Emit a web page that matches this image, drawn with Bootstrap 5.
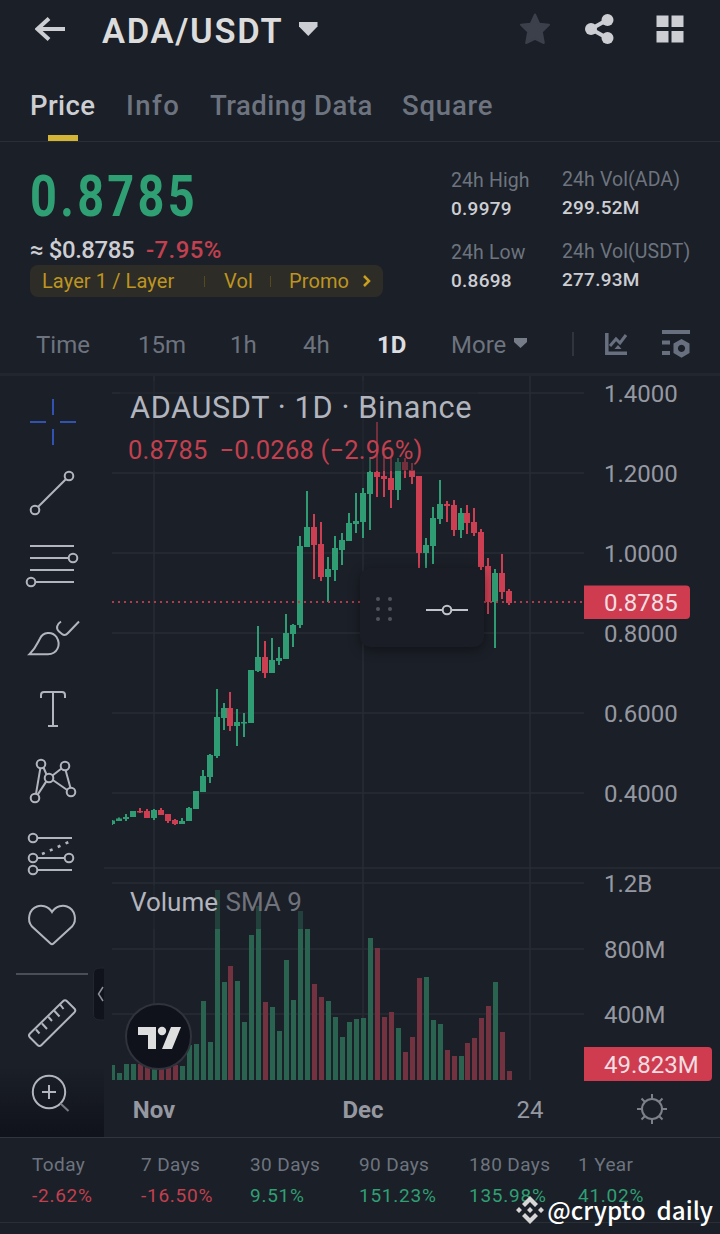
<!DOCTYPE html>
<html lang="en" data-bs-theme="dark">
<head>
<meta charset="utf-8">
<meta name="viewport" content="width=device-width, initial-scale=1">
<title>ADA/USDT</title>
<link href="https://cdn.jsdelivr.net/npm/bootstrap@5.3.0/dist/css/bootstrap.min.css" rel="stylesheet">
<style>
  :root { --bg:#1b1f27; --line:#2a2e36; --fg:#cdced3; --dim:#6d747f; --up:#2f9f74; --down:#c2404f; --gold:#bd951f; }
  body { background:var(--bg); color:var(--fg); font-family:Roboto,"Liberation Sans",sans-serif; width:720px; height:1234px; overflow:hidden; }
  svg { display:block; flex:none; }
  .topbar { height:62px; }
  .pair { font-size:34.5px; font-weight:600; letter-spacing:1.7px; line-height:61px; color:#dcdcdc; margin-left:37px; width:197px; }
  .tabs { height:80px; border-bottom:1px solid var(--line); padding:25px 0 0 30px; font-size:27.5px; font-weight:500; line-height:37px; color:var(--dim); display:grid; grid-template-columns:96px 84px 192px auto; justify-content:start; }
  .tabs .current { color:var(--fg); }
  .tabs .current::after { content:""; position:absolute; left:18px; bottom:0; width:30px; height:6px; background:#d3b437; }
  .quote { height:174px; }
  .lastprice { font-size:56.5px; font-weight:700; line-height:60px; color:var(--up); margin-top:25px; letter-spacing:4px; width:max-content; transform:scaleX(.83); transform-origin:left; }
  .fiat { font-size:24px; font-weight:500; line-height:30px; margin-top:8px; }
  .tags { width:353px; height:32px; border-radius:8px; background:#2e2c27; color:var(--gold); font-size:20px; line-height:32px; padding-left:12px; letter-spacing:.1px; }
  .tags i { width:1px; height:11px; background:#57491f; }
  .figures { padding-top:27px; font-size:19.5px; line-height:24px; }
  .figures dt { font-weight:400; color:var(--dim); margin-bottom:4px; letter-spacing:.1px; }
  .figures dd { font-weight:500; font-size:19px; margin-bottom:20px; letter-spacing:.25px; }
  .frames { height:57px; padding-left:36px; display:grid; grid-template-columns:102px 92px 73px 74px 74px 116px 37px 57px 40px; align-items:center; font-size:24px; color:var(--dim); line-height:57px; }
  .frames > span { padding-top:2px; line-height:55px; }
  .frames > svg { margin-top:-2px; }
  .frames .current { color:#dcdde0; font-weight:700; }
  .workspace { height:764px; border-top:3px solid #22262e; }
  .tools { width:104px; padding-top:10px; background:linear-gradient(to bottom,transparent 690px,#10131c 757px); }
  .tools svg { fill:none; stroke:#b2b5be; stroke-width:2; }
  .tools hr { width:72px; height:2px; margin:11px 0 12px 16px; border:0; background:#6a6e78; opacity:.6; }
  .legend { left:120px; white-space:nowrap; }
  .legend div { background:rgba(27,31,39,.5); width:max-content; }
  .periods { height:86px; border-top:1px solid #32353d; border-bottom:1px solid var(--line); padding:14px 0 0 32px; display:grid; grid-template-columns:109px 109px 109px 110px 109px 100px; font-size:19px; line-height:26px; letter-spacing:.4px; }
  .periods span { color:var(--dim); display:block; margin-bottom:5px; }
  .periods b { letter-spacing:.75px; }
  .up { color:var(--up); } .down { color:var(--down); }
  .sig { right:7px; bottom:8px; color:#fff; font:500 24.2px/32px "Noto Sans CJK SC",sans-serif; white-space:pre; }
</style>
</head>
<body class="position-relative">
<header class="topbar d-flex align-items-center">
  <svg width="30" height="62" style="margin-left:35px" viewBox="35 0 30 62" fill="none" stroke="#cdced3" stroke-width="4"><path d="M65 29H38M49 18.500 37.500 29 49 39.500"/></svg>
  <div class="pair">ADA/USDT</div>
  <svg width="19" height="62" viewBox="298.500 0 19 62" fill="#cdced3"><path d="M298.500 22h18.500v4.500L307.800 36 298.500 26.500z"/></svg>
  <svg class="ms-auto" width="201" height="62" viewBox="519 0 201 62" fill="#cdced3">
    <path fill="#3b404b" stroke="#3b404b" stroke-width="2" stroke-linejoin="round" d="M535 14.500l4.300 9.300 9.700 1-7.200 6.900 2 11.300-8.800-4.200-8.800 4.200 2-11.300-7.200-6.900 9.700-1z"/>
    <path d="M607 20 591 29l16 9" fill="none" stroke="#cdced3" stroke-width="4"/><circle cx="591" cy="29" r="6"/><circle cx="607.500" cy="20" r="6"/><circle cx="607.500" cy="38" r="6"/>
    <path d="M656.500 15.500h12v11.500h-12zM671.500 15.500h12v11.500h-12zM656.500 31h12v11.500h-12zM671.500 31h12v11.500h-12z"/>
  </svg>
</header>
<nav class="tabs">
  <div class="current position-relative" style="letter-spacing:.4px">Price</div><div style="letter-spacing:1.5px">Info</div><div style="letter-spacing:.5px">Trading Data</div><div style="letter-spacing:.8px">Square</div>
</nav>
<section class="quote d-flex">
  <div style="width:421px;padding-left:30px">
    <div class="lastprice">0.8785</div>
    <div class="fiat d-flex"><span style="width:116px;letter-spacing:-.45px">≈ $0.8785</span><span class="down" style="letter-spacing:.4px">-7.95%</span></div>
    <div class="tags d-flex align-items-center"><span style="width:162px">Layer 1 / Layer</span><i></i><span style="width:65px;padding-left:19px">Vol</span><i></i><span style="width:92px;padding-left:18px">Promo</span>
      <svg width="8" height="12" fill="none" stroke="#c9a020" stroke-width="2.500"><path d="M1 1l5 5-5 5"/></svg></div>
  </div>
  <dl class="figures m-0" style="width:141px;padding-left:30px"><dt>24h High</dt><dd>0.9979</dd><dt>24h Low</dt><dd>0.8698</dd></dl>
  <dl class="figures m-0" style="padding-top:25.500px"><dt>24h Vol(ADA)</dt><dd>299.52M</dd><dt>24h Vol(USDT)</dt><dd>277.93M</dd></dl>
</section>
<nav class="frames">
  <span>Time</span><span>15m</span><span>1h</span><span>4h</span><span class="current">1D</span>
  <span class="d-flex align-items-center gap-2">More <svg width="14" height="12" fill="#777d88" style="margin-top:-3px"><path d="M0 0h13v4L6.500 10 0 4z"/></svg></span>
  <svg width="10" height="26" viewBox="568 330 10 26"><path d="M574 331v24" stroke="#30343d" stroke-width="2"/></svg>
  <svg width="24" height="26" viewBox="604 330 24 26" fill="none" stroke="#687080" stroke-width="3.500"><path d="M606.800 332v20.300H627"/><path d="M610 345l6-7 4 4 6-8" stroke-width="3"/><path d="M614.500 348l3.500-4 3.500 4z" fill="#687080" stroke="none"/></svg>
  <svg width="30" height="30" viewBox="661 329 30 30" fill="#687080"><path d="M662 330h28v4h-28zM662 340.500h8v4h-8zM662 351h8v4h-8z"/><path fill-rule="evenodd" d="M681.500 339l8 4.500v9.500l-8 4.700-8-4.700v-9.500zM681.500 344.800a3.600 3.600 0 1 0 .01 0z"/></svg>
</nav>
<main class="workspace d-flex position-relative">
  <aside class="tools">
    <svg width="104" height="72" viewBox="0 386 104 72" style="stroke:#3152b0"><path d="M53 399v16M53 429v16M30 422h16M60 422h16"/></svg>
    <svg width="104" height="72" viewBox="0 458 104 72"><path d="M38.200 506.800 65.800 479.200"/><circle cx="35" cy="510" r="4.300"/><circle cx="69" cy="476" r="4.300"/></svg>
    <svg width="104" height="72" viewBox="0 530 104 72"><path d="M30 546h44M30 558h38.500M30 570h44M35.500 582H74"/><circle cx="73" cy="558" r="4.300"/><circle cx="31" cy="582" r="4.300"/></svg>
    <svg width="104" height="72" viewBox="0 602 104 72"><path d="M29.500 654.200C36 648 37.500 643 40 638.500C43 632 52 631 56.500 637C61.500 645 57 654.200 48 654.200Z"/><path d="M61 621.500C57 624 55.500 628.500 59 631.500L62 634Q65 636.500 68 633L79 621.500"/></svg>
    <svg width="104" height="72" viewBox="0 674 104 72"><path d="M41 698v-3q0-3 3-3h18q3 0 3 3v3M53 692v34M48 726h10"/></svg>
    <svg width="104" height="72" viewBox="0 746 104 72"><path d="M36 793.800 40.300 768.300M43.500 767.500 46.500 774.500M52.500 775.500 61.500 768.500M65.600 770.300 70.400 787.700M52.800 780 67.200 790M37.700 794.600 46.300 781.400"/><circle cx="41" cy="764" r="4.300"/><circle cx="65" cy="766" r="4.300"/><circle cx="49" cy="778" r="4.300"/><circle cx="71" cy="792" r="4.300"/><circle cx="35" cy="798" r="4.300"/></svg>
    <svg width="104" height="72" viewBox="0 818 104 72"><path d="M37.500 838H72M37.500 858h27M37.500 870H72"/><path d="M42 854 70 841.500" stroke-dasharray="3 5.600" stroke-width="2.500"/><circle cx="33" cy="838" r="4.300"/><circle cx="33" cy="858" r="4.300"/><circle cx="69" cy="858" r="4.300"/><circle cx="33" cy="870" r="4.300"/></svg>
    <svg width="104" height="72" viewBox="0 890 104 72"><path d="M52 912C48 905.500 41 905 37 906.500C29 909.500 26.500 920 32 926.500L50.500 943.500Q52 945 53.500 943.500L72 926.500C77.500 920 75 909.500 67 906.500C63 905 56 905.500 52 912Z"/></svg>
    <hr>
    <svg width="104" height="72" viewBox="0 987 104 72"><path d="M63 1001.200q2-2 4 0l7.300 7.300q2 2 0 4L41.500 1045q-2 2-4 0l-7.500-7.500q-2-2 0-4zM36 1029.500l3.500 4M42 1023.500l5 5.500M48.500 1017l3.500 4M54.500 1011l5 5.500M60.500 1005l3 4"/></svg>
    <svg width="104" height="72" viewBox="0 1059 104 72"><circle cx="49" cy="1092" r="16.200"/><path d="M42 1092h14M49 1085v14"/><path d="M60.500 1103.500l8 7.500" stroke="#777a83"/></svg>
  </aside>
  <svg id="chart" width="616" height="761" viewBox="104 376 616 761">
    <g stroke="#282c34" stroke-width="1.500">
      <path d="M112 393H584M112 473H584M112 553H584M112 633H584M112 713H584M112 793H584M112 883H584M112 949H584M112 1014H584M154 376V1080M363 376V1080M530 376V1080"/>
      <path d="M104 868H720"/>
    </g>
    <g id="series"></g>
    <path d="M112 602H584" stroke="#b03b4b" stroke-width="2" stroke-dasharray="2 4"/>
    <g fill="#9598a1" font-size="24" font-family="Roboto, sans-serif">
      <text x="604" y="402">1.4000</text><text x="604" y="482">1.2000</text><text x="604" y="562">1.0000</text><text x="604" y="642">0.8000</text><text x="604" y="722">0.6000</text><text x="604" y="802">0.4000</text>
      <text x="604" y="892">1.2B</text><text x="604" y="958">800M</text><text x="604" y="1023">400M</text>
      <g text-anchor="middle"><text x="154" y="1118" font-weight="700">Nov</text><text x="363" y="1118" font-weight="700">Dec</text><text x="530" y="1118">24</text></g>
    </g>
    <path d="M584 585.500h102q4 0 4 4v25.500q0 4-4 4H584zM584 1047h124q4 0 4 4v26q0 4-4 4H584z" fill="#cf3c50"/>
    <g fill="#f3dde0" font-size="24" font-family="Roboto, sans-serif"><text x="604" y="611">0.8785</text><text x="604" y="1073">49.823M</text></g>
    <g fill="none" stroke="#7d8089" stroke-width="2"><circle cx="652" cy="1109" r="10"/><path d="M652 1094v5M652 1119v5M637 1109h5M662 1109h5M641.500 1098.500l3.500 3.500M659 1116l3.500 3.500M641.500 1119.500l3.500-3.500M659 1102l3.500-3.500"/></g>
  </svg>
  <div class="legend position-absolute" style="top:5px">
    <div style="font-size:30.700px;line-height:45px;letter-spacing:.62px;padding:4px 6px 0 10px;color:#b2b5be">ADAUSDT · 1D · Binance</div>
    <div style="font-size:25.500px;line-height:40px;letter-spacing:.2px;padding:0 3px 1px 8px" class="down"><span style="margin-right:12px">0.8785</span><span>−0.0268 (−2.96%)</span></div>
  </div>
  <div class="legend position-absolute" style="top:509px">
    <div style="font-size:26px;line-height:34px;padding:0 4px 10px 10px;color:#b2b5be">Volume <span style="color:#70737c;margin-left:1px">SMA 9</span></div>
  </div>
  <svg class="position-absolute" style="left:340px;top:172px;filter:drop-shadow(0 3px 6px rgba(0,0,0,.4))" width="164" height="120" viewBox="340 548 164 120">
    <rect x="360" y="568" width="124" height="79" rx="10" fill="#1a1d25"/>
    <g fill="#50535c"><circle cx="378" cy="599" r="2"/><circle cx="390" cy="599" r="2"/><circle cx="378" cy="609" r="2"/><circle cx="390" cy="609" r="2"/><circle cx="378" cy="619" r="2"/><circle cx="390" cy="619" r="2"/></g>
    <g fill="none" stroke="#c2c4cb" stroke-width="2"><path d="M426 610h16.500M451.500 610H468"/><circle cx="447" cy="610" r="4.300"/></g>
  </svg>
  <svg class="position-absolute" style="left:92px;top:591px" width="12" height="54" viewBox="92 967 12 54"><path d="M104.500 968h-4q-7 0-7 6v40q0 6 7 6h4z" fill="#10131c" stroke="#23262f"/><path d="M103 987l-4.500 7 4.500 7" fill="none" stroke="#8d9099" stroke-width="1.500"/></svg>
  <svg class="position-absolute" style="left:124px;top:626px" width="70" height="70" viewBox="124 1002 70 70"><circle cx="158.500" cy="1036.500" r="32.500" fill="#0f121b" stroke="#30333c" stroke-width="2"/><path d="M138 1027h18v22h-8v-14h-10zM171 1027h10l-9 22h-10z" fill="#dedede"/><circle cx="162" cy="1031" r="4.200" fill="#dedede"/></svg>
</main>
<section class="periods">
  <div><span>Today</span><b class="fw-normal down">-2.62%</b></div>
  <div><span>7 Days</span><b class="fw-normal down">-16.50%</b></div>
  <div><span>30 Days</span><b class="fw-normal up">9.51%</b></div>
  <div><span>90 Days</span><b class="fw-normal up">151.23%</b></div>
  <div><span>180 Days</span><b class="fw-normal up">135.98%</b></div>
  <div><span>1 Year</span><b class="fw-normal up">41.02%</b></div>
</section>
<div class="sig position-absolute d-flex align-items-center">
  <svg width="28" height="28" viewBox="0 0 28 28" fill="#d6d6d6" style="margin-right:3px"><path d="M14 0l8 8-3 3-5-5-5 5-3-3zM14 28l8-8-3-3-5 5-5-5-3 3zM3 11l3 3-3 3-3-3zM25 11l3 3-3 3-3-3zM14 11l3 3-3 3-3-3z"/></svg><span>@crypto  daily</span>
</div>
<script src="https://cdn.jsdelivr.net/npm/bootstrap@5.3.0/dist/js/bootstrap.bundle.min.js"></script>
<script>
  // Each day: direction, high, body top, body bottom, low, volume top
  const days = `g 820 820.500 824 825 1065|g 817.500 818.500 821 821 1073|g 814 817 819 821 1064|g 811 811 817 817 1064|r 808 811 812.500 813 1064|r 809 811 818 818 1064|g 809 810 818 820 1060|r 808 810 815 815 1065|r 814 814 821 823 1065|r 819 820 824 825 1065|g 818 821 824 824 1066|g 807 808 821 821 1045|g 791 791 809 809 1044|g 770 776 792 792 1001|g 754 755 777 783 1042|g 689 717 756 758 890|g 703 708 718 730 982|r 692 708 726 731 966|g 709 722 726 746 981|g 713 722 723.500 737 1022|g 670 670 723 723 935|g 626 657 671 672 906|r 641 657 673 678 1002|g 638 660 673 673 1007|g 647 658 661 665 1031|g 614 633 659 659 960|g 624 625 634 647 1000|g 536 546 625 628 911|g 491 527 547 547 929|r 514 527 545 579 984|r 522 544 577 581 997|g 557 569 577 602 1001|g 536 548 570 581 1017|g 533 540 550 565 1037|g 513 523 541 541 1022|g 493 521 524 533 1019|g 488 493 522 538 1018|g 457 472 494 530 938|r 422 472 477 497 948|r 457 476 479 497 1017|r 458 478 490 508 1012|g 458 462 490 500 1028|r 458 462 470 478 1052|r 463 470 477 484 1037|r 476 476 553 571 978|g 538 545 553 571 977|g 507 518 546 564 1020|g 480 504 519 524 1024|r 501 504 506 522 1050|r 500 505 530 536 1056|g 508 513 530 538 1056|r 505 513 523 534 1043|r 508 522 533 536 1038|r 529 532 567 570 1018|r 558 566 602 614 1006|g 569 573 602 648 982|r 554 573 592 599 1032|r 589 591 603 605 1071`;
  const shade = { g: ['#309c73', '#2a6350'], r: ['#cc3f52', '#73323f'] };
  let marks = '';
  days.split('|').forEach((row, k) => {
    const [dir, ...n] = row.split(' ');
    const [hi, top, bottom, lo, vol] = n.map(Number);
    const x = Math.round(112 + k * 6.97), left = Math.max(112, x - 3), w = x + 3 - left;
    marks += `<rect x="${Math.max(112, x - 2)}" y="${vol}" width="${x + 3 - Math.max(112, x - 2)}" height="${1080 - vol}" fill="${shade[dir][1]}"/>`
      + `<rect x="${left}" y="${top}" width="${w}" height="${bottom - top}" fill="${shade[dir][0]}"/>`
      + `<rect x="${x - (k ? 1 : 0)}" y="${hi}" width="${k ? 2 : 1}" height="${lo - hi}" fill="${shade[dir][0]}"/>`;
  });
  document.getElementById('series').innerHTML = marks;
</script>
</body>
</html>
